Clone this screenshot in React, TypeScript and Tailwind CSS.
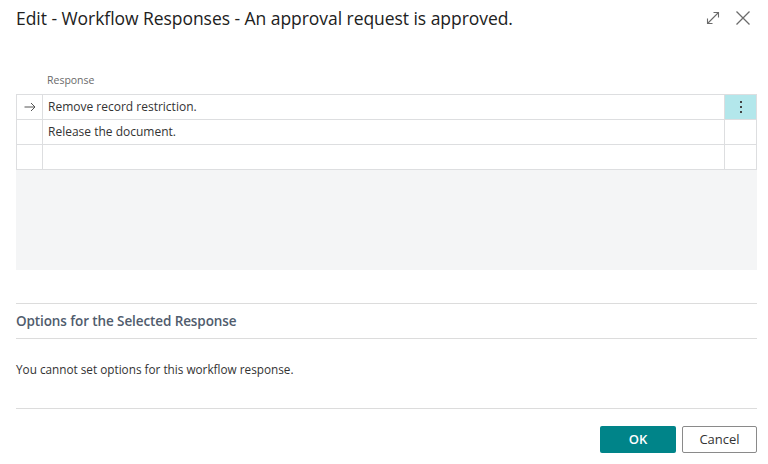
import React from "react";

export default function App() {
  const rows = [
    { text: "Remove record restriction.", active: true },
    { text: "Release the document.", active: false },
    { text: "", active: false },
  ];
  return (
    <div
      className="w-[768px] h-[464px] bg-white flex flex-col text-[#212121] overflow-hidden"
      style={{ fontFamily: '"Segoe UI", "Open Sans", "Liberation Sans", sans-serif' }}
    >
      {/* Header */}
      <div className="flex items-center justify-between pl-4 pr-[17px] h-[36px]">
        <h1 className="text-[17.5px] leading-[24px] font-normal text-[#212121] tracking-[-0.05px]">
          Edit - Workflow Responses - An approval request is approved.
        </h1>
        <div className="flex items-center gap-[14px] text-[#6b6b6b]">
          <svg width="16" height="16" viewBox="0 0 16 16" fill="none" stroke="currentColor" strokeWidth="1.1">
            <path d="M2.5 13.5 L13.5 2.5 M8.5 2.5 H13.5 V7.5 M2.5 8.5 V13.5 H7.5" />
          </svg>
          <svg width="16" height="16" viewBox="0 0 16 16" fill="none" stroke="currentColor" strokeWidth="1.3">
            <path d="M1.5 1.5 L14.5 14.5 M14.5 1.5 L1.5 14.5" />
          </svg>
        </div>
      </div>

      {/* Response label */}
      <div className="pl-[47px] pt-[37px] h-[58px] text-[10.5px] leading-[14px] text-[#6a6a6a]">Response</div>

      {/* Table */}
      <div className="ml-4 mr-[11px] border-t border-l border-[#dddee0]">
        {rows.map((r, i) => (
          <div key={i} className="grid grid-cols-[26px_1fr_32px] h-[25px]">
            <div className="border-r border-b border-[#dddee0] flex items-center justify-center text-[#555]">
              {r.active && (
                <svg width="12" height="10" viewBox="0 0 12 10" fill="none" stroke="currentColor" strokeWidth="1">
                  <path d="M0.5 5 H11 M7 1 L11 5 L7 9" />
                </svg>
              )}
            </div>
            <div className="border-r border-b border-[#dddee0] flex items-center pl-[5px] text-[12px] text-[#333]">
              {r.text}
            </div>
            <div
              className={`border-r border-b border-[#dddee0] flex items-center justify-center ${
                r.active ? "bg-[#b3e7eb]" : ""
              }`}
            >
              {r.active && (
                <div className="flex flex-col gap-[3px]">
                  <span className="w-[2px] h-[2px] bg-[#444]" />
                  <span className="w-[2px] h-[2px] bg-[#444]" />
                  <span className="w-[2px] h-[2px] bg-[#444]" />
                </div>
              )}
            </div>
          </div>
        ))}
        <div className="h-[100px] bg-[#f4f5f6] -ml-px" />
      </div>

      {/* Options section */}
      <div className="ml-4 mr-[11px] mt-[33px] border-t border-b border-[#dcdcdc] h-[36px] flex items-center">
        <span className="text-[13.5px] font-semibold text-[#505c6d] tracking-[-0.1px]">Options for the Selected Response</span>
      </div>
      <div className="pl-4 h-[69px] pt-[22px] leading-[16px] text-[11.75px] text-[#333]">
        You cannot set options for this workflow response.
      </div>
      <div className="ml-4 mr-[11px] border-t border-[#dcdcdc]" />

      {/* Buttons */}
      <div className="flex justify-end gap-[6px] mr-[11px] mt-[17px]">
        <button className="w-[76px] h-[27px] bg-[#008489] text-white text-[13px] font-semibold rounded-[2px]">OK</button>
        <button className="w-[75px] h-[27px] bg-white border border-[#8a8a8a] text-[#333] text-[13px] rounded-[2px]">
          Cancel
        </button>
      </div>
    </div>
  );
}
